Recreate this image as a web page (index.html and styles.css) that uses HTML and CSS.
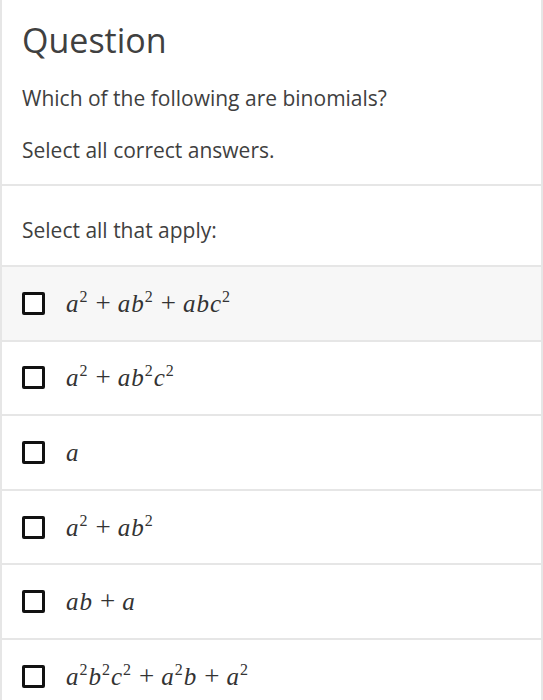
FILE: index.html
```html
<!DOCTYPE html>
<html>
<head>
<meta charset="utf-8">
<link rel="stylesheet" href="styles.css">
</head>
<body>
<div class="panel">
  <section class="intro">
    <h1 class="title">Question</h1>
    <p class="prompt">Which of the following are binomials?</p>
    <p class="prompt last">Select all correct answers.</p>
  </section>
  <section class="instr">
    <p>Select all that apply:</p>
  </section>
  <ul class="choices">
    <li class="choice hover"><span class="box"></span><span class="math"><i>a</i><sup>2</sup><span class="op">+</span><i>a</i><i>b</i><sup>2</sup><span class="op">+</span><i>a</i><i>b</i><i>c</i><sup>2</sup></span></li>
    <li class="choice"><span class="box"></span><span class="math"><i>a</i><sup>2</sup><span class="op">+</span><i>a</i><i>b</i><sup>2</sup><i>c</i><sup>2</sup></span></li>
    <li class="choice"><span class="box"></span><span class="math"><i>a</i></span></li>
    <li class="choice"><span class="box"></span><span class="math"><i>a</i><sup>2</sup><span class="op">+</span><i>a</i><i>b</i><sup>2</sup></span></li>
    <li class="choice"><span class="box"></span><span class="math"><i>a</i><i>b</i><span class="op">+</span><i>a</i></span></li>
    <li class="choice"><span class="box"></span><span class="math"><i>a</i><sup>2</sup><i>b</i><sup>2</sup><i>c</i><sup>2</sup><span class="op">+</span><i>a</i><sup>2</sup><i>b</i><span class="op">+</span><i>a</i><sup>2</sup></span></li>
  </ul>
</div>
</body>
</html>
```
FILE: styles.css
```css
html, body {
  margin: 0;
  padding: 0;
  background: #ffffff;
}
body {
  font-family: "Open Sans", "Liberation Sans", sans-serif;
  color: #3f3f3f;
}
.panel {
  width: 539px;
  border-left: 2px solid #e6e6e6;
  border-right: 2px solid #e6e6e6;
  min-height: 700px;
}
.intro {
  padding: 20px 20px 18px 20px;
  border-bottom: 2px solid #e6e6e6;
}
.title {
  margin: 0 0 22px 0;
  font-size: 34px;
  font-weight: 400;
  line-height: 40px;
  color: #404040;
}
.prompt {
  margin: 0 0 20px 0;
  font-size: 21px;
  line-height: 32px;
}
.prompt.last {
  margin-bottom: 0;
}
.instr {
  padding: 28px 20px 19px 20px;
  border-bottom: 2px solid #e6e6e6;
}
.instr p {
  margin: 0;
  font-size: 21px;
  line-height: 32px;
}
.choices {
  list-style: none;
  margin: 0;
  padding: 0;
}
.choice {
  display: flex;
  align-items: center;
  gap: 21px;
  height: 72.6px;
  padding: 0 20px;
  border-bottom: 2px solid #e6e6e6;
}
.choice.hover {
  background: #f7f7f7;
}
.box {
  flex: none;
  width: 17px;
  height: 17px;
  border: 3px solid #111;
  border-radius: 2px;
  background: #fff;
}
.math {
  font-family: "Liberation Serif", "DejaVu Serif", serif;
  font-size: 25px;
  color: #333;
  line-height: 1;
}
.math i {
  font-style: italic;
  margin-right: 1px;
}
.math sup {
  font-style: normal;
  font-size: 16px;
  vertical-align: 10px;
  line-height: 0;
  margin-right: 1px;
}
.math .op {
  margin: 0 7px;
  font-size: 27px;
}
```
